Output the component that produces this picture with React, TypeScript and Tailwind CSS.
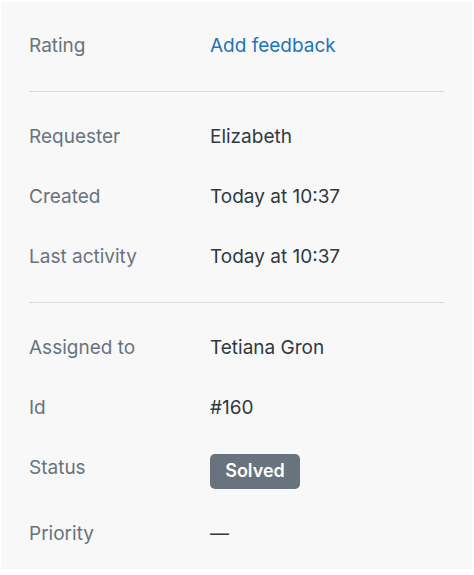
const font = { fontFamily: "Inter, 'Noto Sans', sans-serif" };

function Row({
  label,
  children,
  className = "h-[60px]",
  labelClass = "",
}: {
  label: string;
  children: React.ReactNode;
  className?: string;
  labelClass?: string;
}) {
  return (
    <div className={`flex items-center ${className}`}>
      <div className={`w-[181px] shrink-0 text-[#68737d] ${labelClass}`}>{label}</div>
      <div className="text-[#2f3941]">{children}</div>
    </div>
  );
}

export default function App() {
  return (
    <div className="min-h-[575px] bg-white pt-[2px] pl-[1px] pr-[2px] pb-[6px]" style={font}>
      <div className="bg-[#f8f8f8] px-[28px] pt-[14px] pb-[5px] text-[19px] leading-[28px] antialiased">
        <Row label="Rating">
          <span className="text-[#1f73b7]">Add feedback</span>
        </Row>

        <div className="my-[15px] h-px bg-[#d8dcde]" />

        <Row label="Requester">Elizabeth</Row>
        <Row label="Created">Today at 10:37</Row>
        <Row label="Last activity">Today at 10:37</Row>

        <div className="my-[15px] h-px bg-[#d8dcde]" />

        <Row label="Assigned to">Tetiana Gron</Row>
        <Row label="Id">#160</Row>
        <Row label="Status" className="h-[66px]" labelClass="-mt-[6px]">
          <span className="inline-flex h-[35px] w-[90px] items-center justify-center rounded-[5px] bg-[#68737d] text-[18px] font-semibold text-white">
            Solved
          </span>
        </Row>
        <Row label="Priority">—</Row>
      </div>
    </div>
  );
}
